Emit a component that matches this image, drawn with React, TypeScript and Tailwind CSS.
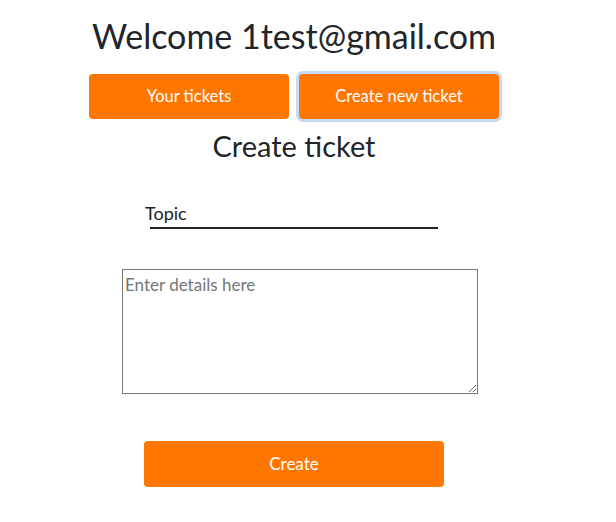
export default function App() {
  return (
    <div className="w-[588px] flex flex-col items-center bg-white text-[#212529] font-['Lato','Noto_Sans',sans-serif]">
      <h1 className="mt-[15px] text-[34px] leading-[42px] font-normal">Welcome 1test@gmail.com</h1>

      <div className="mt-[17px] flex gap-[10px]">
        <button className="h-[45px] w-[200px] rounded-[4px] bg-[#ff7600] text-[16.5px] text-white">
          Your tickets
        </button>
        <button className="h-[45px] w-[200px] rounded-[4px] bg-[#ff7600] text-[16.5px] text-white ring-[3px] ring-[#c4daf7]">
          Create new ticket
        </button>
      </div>

      <h2 className="mt-[10px] text-[29px] leading-[34px] font-normal">Create ticket</h2>

      <div className="mt-[40px] w-[298px] relative">
        <input
          className="block h-[26px] w-[288px] ml-[5px] border-b-2 border-[#222] p-0 text-[18px] outline-none"
          defaultValue=""
        />
        <span className="absolute left-0 top-[-2px] text-[18px] leading-[24px] text-[#222] pointer-events-none">
          Topic
        </span>
      </div>

      <textarea
        className="mt-[40px] ml-[12px] h-[125px] w-[356px] border border-[#767676] px-[2px] py-[4px] text-[17px] leading-[22px] placeholder:text-[#767676]"
        placeholder="Enter details here"
      />

      <button className="mt-[47px] h-[46px] w-[300px] rounded-[4px] bg-[#ff7600] text-[17px] text-white">
        Create
      </button>
    </div>
  );
}
